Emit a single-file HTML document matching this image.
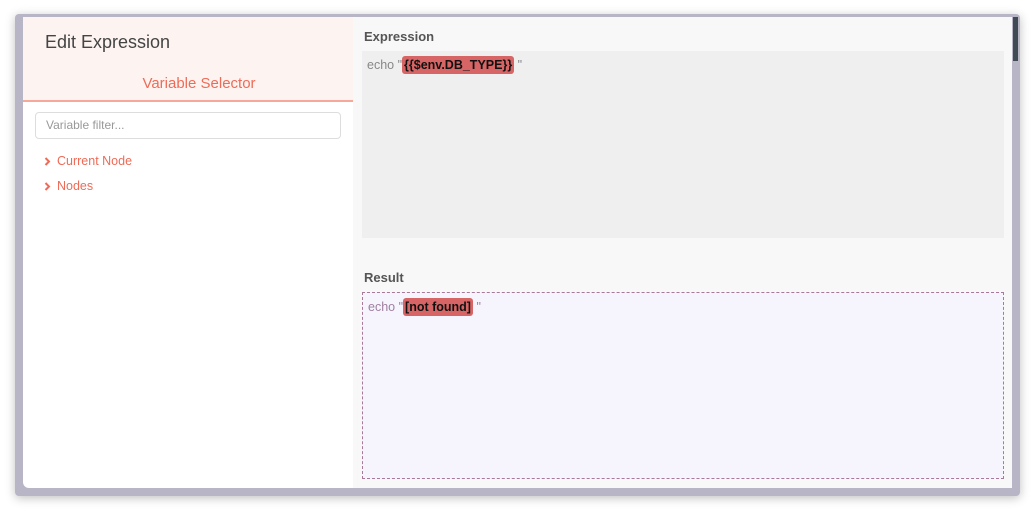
<!DOCTYPE html>
<html><head><meta charset="utf-8"><style>
body{margin:0;width:1035px;height:511px;background:#fff;position:relative;overflow:hidden;font-family:"Liberation Sans",sans-serif}
.frame{position:absolute;left:15px;top:14px;width:1005px;height:482px;background:#b8b6c6;border-radius:4px;box-shadow:0 2px 10px rgba(0,0,0,.25)}
.dlg{position:absolute;left:23px;top:17px;width:989px;height:471px;background:#fff;border-radius:0 0 0 6px;overflow:hidden}
.lh{position:absolute;left:0;top:0;width:330px;height:83px;background:#fdf4f1;border-bottom:2px solid #f4a99a}
.title{position:absolute;left:22px;top:15px;font-size:18px;color:#444}
.vs{position:absolute;left:0;width:352px;top:58px;text-align:center;font-size:15px;color:#ee6b57}
.filter{position:absolute;left:12px;top:95px;width:294px;height:25px;border:1px solid #ddd;border-radius:4px;font-size:12px;color:#999;line-height:25px;padding-left:10px}
.item{position:absolute;left:34px;font-size:12.5px;color:#ee6b57}
.chev{position:absolute;left:20px;width:9px;height:9px}
.right{position:absolute;left:330px;top:0;width:659px;height:471px;background:#f8f8f8}
.lbl{position:absolute;left:11px;font-size:13px;font-weight:bold;color:#555}
.box{position:absolute;left:9px;width:642px;background:#efefef}
.code{position:absolute;left:5px;top:7px;font-size:12.5px;color:#888}
.tag{background:#d86565;color:#111;font-weight:bold;padding:2px 2px;border-radius:3px}
.sb{position:absolute;left:1013px;top:17px;width:5px;height:44px;background:#3f4a55}
</style></head><body>
<div class="frame"></div>
<div class="dlg">
<div class="lh"><div class="title">Edit Expression</div></div>
<div class="vs">Variable Selector</div>
<div class="filter">Variable filter...</div>
<svg class="chev" style="top:140px" viewBox="0 0 9 9"><path d="M2.5 1 L6 4.5 L2.5 8" fill="none" stroke="#ee6b57" stroke-width="2"/></svg>
<div class="item" style="top:137px">Current Node</div>
<svg class="chev" style="top:165px" viewBox="0 0 9 9"><path d="M2.5 1 L6 4.5 L2.5 8" fill="none" stroke="#ee6b57" stroke-width="2"/></svg>
<div class="item" style="top:162px">Nodes</div>
<div class="right">
<div class="lbl" style="top:12px">Expression</div>
<div class="box" style="top:34px;height:187px"><div class="code">echo "<span class="tag">{{$env.DB_TYPE}}</span> "</div></div>
<div class="lbl" style="top:253px">Result</div>
<div class="box" style="top:275px;height:185px;background:#f6f4fd;border:1px dashed #a87a98;width:640px"><div class="code" style="color:#a080a0">echo "<span class="tag">[not found]</span> "</div></div>
</div>
</div>
<div class="sb"></div>
</body></html>
